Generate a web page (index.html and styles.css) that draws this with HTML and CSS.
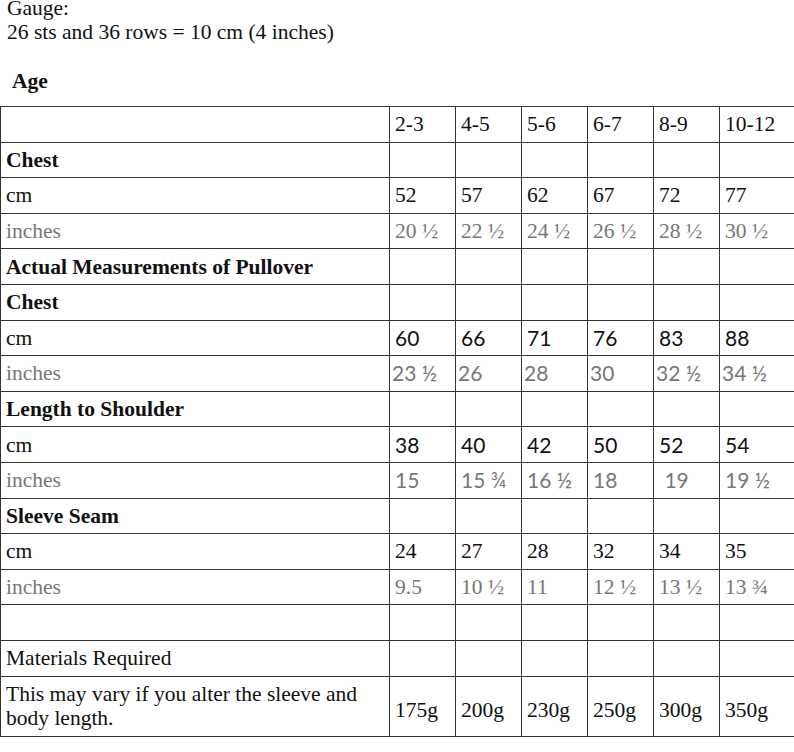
FILE: index.html
```html
<!DOCTYPE html>
<html>
<head>
<meta charset="utf-8">
<link rel="stylesheet" href="styles.css">
</head>
<body>
<div class="gauge">Gauge:<br>26 sts and 36 rows = 10 cm (4 inches)</div>
<div class="age">Age</div>
<table class="sizes">
  <colgroup>
    <col class="c-label"><col class="c-val"><col class="c-val"><col class="c-val"><col class="c-val"><col class="c-val"><col class="c-last">
  </colgroup>
  <tr><td></td><td>2-3</td><td>4-5</td><td>5-6</td><td>6-7</td><td>8-9</td><td>10-12</td></tr>
  <tr><td class="b">Chest</td><td></td><td></td><td></td><td></td><td></td><td></td></tr>
  <tr><td>cm</td><td>52</td><td>57</td><td>62</td><td>67</td><td>72</td><td>77</td></tr>
  <tr class="grey"><td>inches</td><td>20 ½</td><td>22 ½</td><td>24 ½</td><td>26 ½</td><td>28 ½</td><td>30 ½</td></tr>
  <tr><td class="b">Actual Measurements of Pullover</td><td></td><td></td><td></td><td></td><td></td><td></td></tr>
  <tr><td class="b">Chest</td><td></td><td></td><td></td><td></td><td></td><td></td></tr>
  <tr class="sans"><td class="serif">cm</td><td>60</td><td>66</td><td>71</td><td>76</td><td>83</td><td>88</td></tr>
  <tr class="grey sans tight"><td class="serif">inches</td><td>23 ½</td><td>26</td><td>28</td><td>30</td><td>32 ½</td><td>34 ½</td></tr>
  <tr><td class="b">Length to Shoulder</td><td></td><td></td><td></td><td></td><td></td><td></td></tr>
  <tr class="sans"><td class="serif">cm</td><td>38</td><td>40</td><td>42</td><td>50</td><td>52</td><td>54</td></tr>
  <tr class="grey sans"><td class="serif">inches</td><td>15</td><td>15 ¾</td><td>16 ½</td><td>18</td><td>&nbsp;19</td><td>19 ½</td></tr>
  <tr><td class="b">Sleeve Seam</td><td></td><td></td><td></td><td></td><td></td><td></td></tr>
  <tr><td>cm</td><td>24</td><td>27</td><td>28</td><td>32</td><td>34</td><td>35</td></tr>
  <tr class="grey"><td>inches</td><td>9.5</td><td>10 ½</td><td>11</td><td>12 ½</td><td>13 ½</td><td>13 ¾</td></tr>
  <tr><td></td><td></td><td></td><td></td><td></td><td></td><td></td></tr>
  <tr><td>Materials Required</td><td></td><td></td><td></td><td></td><td></td><td></td></tr>
  <tr class="tall"><td>This may vary if you alter the sleeve and body length.</td><td>175g</td><td>200g</td><td>230g</td><td>250g</td><td>300g</td><td>350g</td></tr>
</table>
</body>
</html>
```

FILE: styles.css
```css
html, body {
  margin: 0;
  padding: 0;
  background: #ffffff;
}

body {
  font-family: "Liberation Serif", "Times New Roman", serif;
  font-size: 21.5px;
  line-height: 24px;
  color: #111111;
}

.gauge {
  margin-top: -4px;
  padding-left: 7px;
}

.age {
  font-weight: bold;
  margin-top: 25px;
  padding-left: 12px;
}

.sizes {
  margin-top: 13px;
  border-collapse: collapse;
  table-layout: fixed;
  width: 794px;
}

.c-label { width: 389px; }
.c-val { width: 66px; }
.c-last { width: 75px; }

.sizes td {
  border: 1px solid #333333;
  height: 34.6px;
  padding: 0 0 0 5px;
  vertical-align: middle;
  white-space: nowrap;
  overflow: hidden;
}

.sizes td.b {
  font-weight: bold;
}

.sizes tr.grey td {
  color: #777777;
}

.sizes tr.sans td {
  font-family: Lato, "Carlito", "Liberation Sans", sans-serif;
  font-size: 21px;
}

.sizes tr.sans td.serif {
  font-family: "Liberation Serif", "Times New Roman", serif;
  font-size: 21.5px;
}

.sizes tr.tight td {
  padding-left: 2px;
}

.sizes tr.tight td.serif {
  padding-left: 5px;
}

.sizes tr.tall td {
  height: 59px;
  white-space: normal;
}

.sizes tr.tall td:not(:first-child) {
  padding-top: 7px;
  height: 52px;
}
```
